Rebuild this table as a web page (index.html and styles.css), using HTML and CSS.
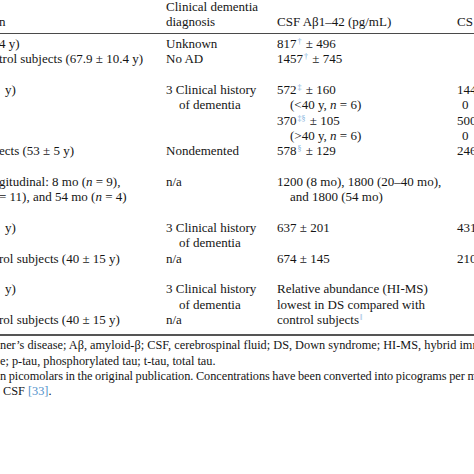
FILE: index.html
```html
<!DOCTYPE html>
<html>
<head>
<meta charset="utf-8">
<link rel="stylesheet" href="styles.css">
</head>
<body>
<div class="page">
  <div class="table">
    <div class="row head">
      <div class="cell c1"><br><span class="cut">n</span></div>
      <div class="cell">Clinical dementia<br>diagnosis</div>
      <div class="cell"><br>CSF Aβ1–42 (pg/mL)</div>
      <div class="cell"><br>CS</div>
    </div>
    <div class="body">
      <div class="row first">
        <div class="cell c1"><span class="cut">4 y)</span><br><span class="cut">trol subjects (67.9 ± 10.4 y)</span></div>
        <div class="cell">Unknown<br>No AD</div>
        <div class="cell">817<sup>†</sup> ± 496<br>1457<sup>†</sup> ± 745</div>
        <div class="cell"></div>
      </div>
      <div class="row">
        <div class="cell c1"><span class="y">y)</span><br><br><br><br><span class="cut">ects (53 ± 5 y)</span></div>
        <div class="cell">3 Clinical history<br><span class="ind">of dementia</span><br><br><br>Nondemented</div>
        <div class="cell">572<sup>‡</sup> ± 160<br><span class="ind">(&lt;40 y, <i>n</i> = 6)</span><br>370<sup>‡§</sup> ± 105<br><span class="ind">(&gt;40 y, <i>n</i> = 6)</span><br>578<sup>§</sup> ± 129</div>
        <div class="cell">144<br><span class="ind4">0</span><br>500<br><span class="ind4">0</span><br>246</div>
      </div>
      <div class="row">
        <div class="cell c1"><span class="cut">gitudinal: 8 mo (<i>n</i> = 9),</span><br><span class="cut">= 11), and 54 mo (<i>n</i> = 4)</span></div>
        <div class="cell">n/a</div>
        <div class="cell">1200 (8 mo), 1800 (20–40 mo),<br><span class="ind">and 1800 (54 mo)</span></div>
        <div class="cell"></div>
      </div>
      <div class="row">
        <div class="cell c1"><span class="y">y)</span><br><br><span class="cut">rol subjects (40 ± 15 y)</span></div>
        <div class="cell">3 Clinical history<br><span class="ind">of dementia</span><br>n/a</div>
        <div class="cell">637 ± 201<br><br>674 ± 145</div>
        <div class="cell">431<br><br>210</div>
      </div>
      <div class="row last">
        <div class="cell c1"><span class="y">y)</span><br><br><span class="cut">rol subjects (40 ± 15 y)</span></div>
        <div class="cell">3 Clinical history<br><span class="ind">of dementia</span><br>n/a</div>
        <div class="cell">Relative abundance (HI-MS)<br>lowest in DS compared with<br>control subjects<sup>‖</sup></div>
        <div class="cell"></div>
      </div>
    </div>
  </div>
  <div class="notes">
    <p>ner’s disease; Aβ, amyloid-β; CSF, cerebrospinal fluid; DS, Down syndrome; HI-MS, hybrid immunoaffinity</p>
    <p>e; p-tau, phosphorylated tau; t-tau, total tau.</p>
    <p class="tight">n picomolars in the original publication. Concentrations have been converted into picograms per milliliter</p>
    <p class="csf">CSF <span class="ref">[33]</span>.</p>
  </div>
</div>
</body>
</html>
```
FILE: styles.css
```css
html, body {
  margin: 0;
  padding: 0;
  background: #ffffff;
}
.page {
  width: 474px;
  height: 474px;
  overflow: hidden;
  font-family: "Liberation Serif", "Times New Roman", serif;
  font-size: 12.3px;
  line-height: 15.33px;
  color: #151515;
}
.table {
  margin-top: -1px;
  font-size: 13px;
}
.row {
  display: grid;
  grid-template-columns: 166px 111px 180px 1fr;
  white-space: nowrap;
}
.head {
  padding-bottom: 3px;
  border-bottom: 1.3px solid #4a4a4a;
}
.body {
  display: flex;
  flex-direction: column;
  gap: 15.33px;
  padding-top: 2.5px;
  padding-bottom: 7px;
  border-bottom: 2px solid #555555;
}
.cut {
  margin-left: -1px;
}
.y {
  margin-left: 5px;
}
.ind {
  padding-left: 13px;
}
.ind4 {
  padding-left: 5px;
}
sup {
  font-size: 8px;
  line-height: 0;
  vertical-align: 4px;
  color: #7fb0dc;
  padding: 0 1px;
}
.notes {
  padding-top: 2px;
  white-space: nowrap;
  overflow: hidden;
}
.notes p {
  margin: 0;
}
.tight {
  letter-spacing: -0.05px;
  word-spacing: -0.4px;
}
.csf {
  padding-left: 3px;
}
.ref {
  color: #4f8fca;
}
```
